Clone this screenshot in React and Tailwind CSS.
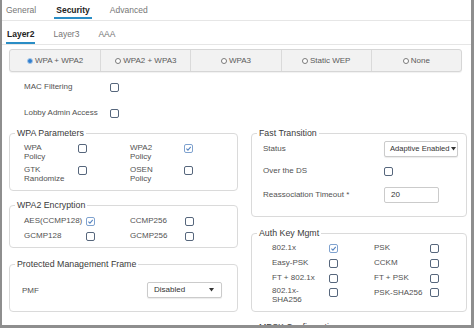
import React from "react";

function Cb({ checked, className = "" }) {
  if (checked) {
    return (
      <span className={"inline-flex w-[9px] h-[9px] shrink-0 rounded-[2px] border border-[#7fa2cf] bg-white items-center justify-center " + className}>
        <svg width="7" height="7" viewBox="0 0 10 10">
          <path d="M2 5.3 L4.2 7.4 L8.2 2.8" fill="none" stroke="#5583bf" strokeWidth="1.5" />
        </svg>
      </span>
    );
  }
  return <span className={"inline-block w-[9px] h-[9px] shrink-0 rounded-[2px] border-[1.5px] border-[#56667c] bg-white " + className} />;
}

function Box({ title, className = "", children }) {
  return (
    <fieldset className={"border border-[#dadada] rounded-[4px] px-[5px] m-0 min-w-0 " + className}>
      <legend className="px-[2px] text-[8.8px] leading-[12px] text-[#3a3a3a]">{title}</legend>
      {children}
    </fieldset>
  );
}

function Radio({ on }) {
  return on ? (
    <span className="inline-block w-[6px] h-[6px] rounded-full bg-[#2f7fd0] border border-[#a9c7e6]" />
  ) : (
    <span className="inline-block w-[6px] h-[6px] rounded-full bg-white border border-[#7a7a7a]" />
  );
}

function Arrow() {
  return (
    <svg width="5" height="4" viewBox="0 0 5 4" className="shrink-0">
      <path d="M0 0 L5 0 L2.5 3.5 Z" fill="#333" />
    </svg>
  );
}

export default function App() {
  const opts = ["WPA + WPA2", "WPA2 + WPA3", "WPA3", "Static WEP", "None"];
  return (
    <div className="w-[474px] h-[328px] overflow-hidden bg-white border-l-2 border-r-[3px] border-b-[3px] border-[#8e8e8e] text-[#525252] font-['Liberation_Sans',Arial,sans-serif]">
      {/* top tabs */}
      <div className="flex h-[19px] pl-[2px] gap-[16px] text-[8.5px]">
        <div className="px-[2px] pt-[3px] flex items-center border-b-2 border-transparent text-[#767676]">General</div>
        <div className="px-[2px] pt-[3px] flex items-center border-b-2 border-[#2a8dc5] font-bold text-[#222]">Security</div>
        <div className="px-[2px] pt-[3px] flex items-center border-b-2 border-transparent text-[#767676]">Advanced</div>
      </div>
      <div className="h-px bg-[#e6e6e6] mt-[1px]" />
      {/* sub tabs */}
      <div className="flex h-[23px] pl-[4px] gap-[17px] text-[8.5px]">
        <div className="px-[1px] pt-[5px] flex items-center border-b-2 border-[#2a8dc5] font-bold text-[#222]">Layer2</div>
        <div className="px-[1px] pt-[5px] flex items-center border-b-2 border-transparent text-[#767676]">Layer3</div>
        <div className="px-[1px] pt-[5px] flex items-center border-b-2 border-transparent text-[#767676]">AAA</div>
      </div>
      <div className="h-px bg-[#e6e6e6]" />
      {/* segmented */}
      <div className="ml-[7px] mt-[4px] w-[453px] h-[23px] grid grid-cols-5 border border-[#d6d6d6] rounded-[3px] bg-[#f2f2f2] text-[8px] text-[#5a5a5a] shadow-[0_1px_1px_rgba(0,0,0,0.06)]">
        {opts.map((o, i) => (
          <div key={o} className={"flex items-center justify-center gap-[2px] " + (i > 0 ? "border-l border-[#dadada]" : "")}>
            <Radio on={i === 0} />
            <span>{o}</span>
          </div>
        ))}
      </div>
      {/* mac / lobby */}
      <div className="mt-[2px] pl-[22px] text-[8px]">
        <div className="h-[26px] flex items-center">
          <span className="w-[86px]">MAC Filtering</span>
          <Cb />
        </div>
        <div className="h-[26px] flex items-center">
          <span className="w-[86px]">Lobby Admin Access</span>
          <Cb />
        </div>
      </div>
      {/* columns */}
      <div className="flex items-start gap-[13px] pl-[7px] mt-[1px] text-[8px]">
        <div className="w-[229px] flex flex-col">
          <Box title="WPA Parameters">
            <div className="pt-[4px] pb-[7px] pl-[9px] grid grid-cols-[54px_52px_54px_auto] gap-y-[4px] items-start leading-[9px]">
              <div className="h-[18px]">WPA<br />Policy</div>
              <Cb className="mt-[1px]" />
              <div className="h-[18px]">WPA2<br />Policy</div>
              <Cb checked className="mt-[1px]" />
              <div className="h-[18px]">GTK<br />Randomize</div>
              <Cb className="mt-[1px]" />
              <div className="h-[18px]">OSEN<br />Policy</div>
              <Cb className="mt-[1px]" />
            </div>
          </Box>
          <Box title="WPA2 Encryption" className="mt-[8px]">
            <div className="pt-[4px] pb-[5px] pl-[9px] grid grid-cols-[62px_44px_55px_auto] gap-y-[3px] items-center">
              <div className="h-[12px] flex items-center">AES(CCMP128)</div>
              <Cb checked />
              <div className="h-[12px] flex items-center">CCMP256</div>
              <Cb />
              <div className="h-[12px] flex items-center">GCMP128</div>
              <Cb />
              <div className="h-[12px] flex items-center">GCMP256</div>
              <Cb />
            </div>
          </Box>
          <Box title="Protected Management Frame" className="mt-[10px]">
            <div className="pt-[12px] pb-[13px] pl-[7px] flex items-center">
              <span className="w-[125px] pt-[2px]">PMF</span>
              <div className="w-[75px] h-[16px] border border-[#cbcbcb] rounded-[2px] bg-white flex items-center justify-between pl-[6px] pr-[7px] text-[#333] shadow-[0_1px_1px_rgba(0,0,0,0.08)]">
                <span>Disabled</span>
                <Arrow />
              </div>
            </div>
          </Box>
        </div>
        <div className="w-[216px] flex flex-col">
          <Box title="Fast Transition">
            <div className="pt-[2px] pb-[13px] pl-[6px] flex flex-col">
              <div className="h-[16px] flex items-center">
                <span className="w-[121px]">Status</span>
                <div className="w-[74px] h-[16px] border border-[#cbcbcb] rounded-[2px] bg-white flex items-center pl-[5px] gap-[1px] text-[7.6px] text-[#333] whitespace-nowrap overflow-hidden shadow-[0_1px_1px_rgba(0,0,0,0.08)]">
                  <span className="whitespace-nowrap">Adaptive Enabled</span>
                  <Arrow />
                </div>
              </div>
              <div className="h-[14px] mt-[7px] flex items-center">
                <span className="w-[121px]">Over the DS</span>
                <Cb />
              </div>
              <div className="h-[16px] mt-[9px] flex items-center">
                <span className="w-[121px]">Reassociation Timeout *</span>
                <div className="w-[55px] h-[16px] border border-[#cbcbcb] rounded-[2px] bg-white flex items-center pl-[6px] text-[#333]">20</div>
              </div>
            </div>
          </Box>
          <Box title="Auth Key Mgmt" className="mt-[10px]">
            <div className="pt-[3px] pb-[7px] pl-[15px] grid grid-cols-[57px_45px_56px_auto] gap-y-[3px] items-center">
              <div className="h-[12px] flex items-center">802.1x</div>
              <Cb checked />
              <div className="h-[12px] flex items-center">PSK</div>
              <Cb />
              <div className="h-[12px] flex items-center">Easy-PSK</div>
              <Cb />
              <div className="h-[12px] flex items-center">CCKM</div>
              <Cb />
              <div className="h-[12px] flex items-center">FT + 802.1x</div>
              <Cb />
              <div className="h-[12px] flex items-center">FT + PSK</div>
              <Cb />
              <div className="h-[17px] leading-[8.5px] self-start">802.1x-<br />SHA256</div>
              <Cb className="self-start mt-[1px]" />
              <div className="h-[12px] flex items-center self-start">PSK-SHA256</div>
              <Cb className="self-start mt-[1px]" />
            </div>
          </Box>
          <Box title="MPSK Configuration" className="mt-[9px]">
            <div className="h-[30px]" />
          </Box>
        </div>
      </div>
    </div>
  );
}
